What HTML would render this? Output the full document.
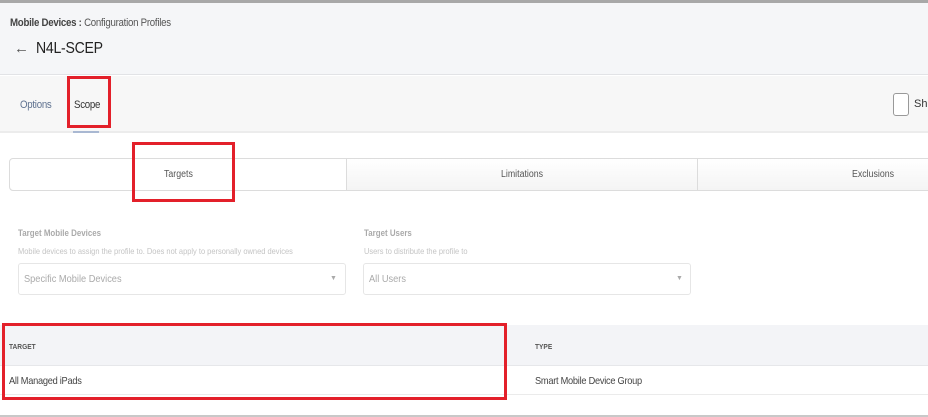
<!DOCTYPE html>
<html><head><style>
*{margin:0;padding:0;box-sizing:border-box}
body{width:928px;height:417px;overflow:hidden;background:#fff;font-family:"Liberation Sans",sans-serif;position:relative;color:#333}
.a{position:absolute}
.n{transform:scaleX(0.88);transform-origin:0 0;white-space:nowrap}
.red{position:absolute;border:3px solid #e3202a}
</style></head><body>
<div class="a" style="left:0;top:0;width:928px;height:3px;background:#a8a8a8"></div>
<div class="a" style="left:0;top:3px;width:928px;height:72px;background:#f5f6f8;border-bottom:1px solid #e2e3e6"></div>
<div class="a n" style="left:10px;top:17px;font-size:11px;color:#555;letter-spacing:-0.3px"><b style="color:#444">Mobile Devices</b> <b>:</b> Configuration Profiles</div>
<div class="a" style="left:14px;top:40px;font-size:15px;color:#555">&larr;</div>
<div class="a n" style="left:36px;top:40px;font-size:16px;color:#222;letter-spacing:-0.3px">N4L-SCEP</div>
<div class="a" style="left:0;top:76px;width:928px;height:57px;background:#f7f7f7;border-bottom:2px solid #ececec"></div>
<div class="a n" style="left:20px;top:99px;font-size:11px;color:#5f7290;letter-spacing:-0.3px">Options</div>
<div class="a n" style="left:74px;top:99px;font-size:11px;color:#333;letter-spacing:-0.3px">Scope</div>
<div class="a" style="left:73px;top:131px;width:26px;height:2px;background:#a9b8d2"></div>
<div class="a" style="left:893px;top:93px;width:16px;height:23px;border:1px solid #999;border-radius:3px;background:#fff"></div>
<div class="a" style="left:914px;top:98px;font-size:11px;color:#333">Sho</div>
<div class="a" style="left:9px;top:158px;width:930px;height:33px;border:1px solid #dcdcdc;border-radius:4px;background:linear-gradient(#fff,#f4f4f4)"></div>
<div class="a" style="left:10px;top:159px;width:336px;height:31px;background:#fff;border-radius:4px 0 0 4px"></div>
<div class="a" style="left:346px;top:159px;width:1px;height:31px;background:#dcdcdc"></div>
<div class="a" style="left:697px;top:159px;width:1px;height:31px;background:#dcdcdc"></div>
<div class="a n" style="left:164px;top:169px;font-size:10px;color:#555">Targets</div>
<div class="a n" style="left:501px;top:169px;font-size:10px;color:#555">Limitations</div>
<div class="a n" style="left:852px;top:169px;font-size:10px;color:#555">Exclusions</div>
<div class="a n" style="left:18px;top:228px;font-size:9px;color:#aaa;font-weight:bold">Target Mobile Devices</div>
<div class="a n" style="left:18px;top:246px;font-size:8.5px;color:#c4c4c4">Mobile devices to assign the profile to. Does not apply to personally owned devices</div>
<div class="a" style="left:18px;top:263px;width:328px;height:32px;border:1px solid #e6e6e6;border-radius:3px"></div>
<div class="a n" style="left:24px;top:273px;font-size:10.5px;color:#aaa">Specific Mobile Devices</div>
<div class="a" style="left:330px;top:275px;font-size:7px;color:#aaa">&#9660;</div>
<div class="a n" style="left:364px;top:228px;font-size:9px;color:#aaa;font-weight:bold">Target Users</div>
<div class="a n" style="left:364px;top:246px;font-size:8.5px;color:#c4c4c4">Users to distribute the profile to</div>
<div class="a" style="left:363px;top:263px;width:328px;height:32px;border:1px solid #e6e6e6;border-radius:3px"></div>
<div class="a n" style="left:369px;top:273px;font-size:10.5px;color:#aaa">All Users</div>
<div class="a" style="left:676px;top:275px;font-size:7px;color:#aaa">&#9660;</div>
<div class="a" style="left:0;top:325px;width:928px;height:41px;background:#f3f4f7;border-bottom:1px solid #e6e7ea"></div>
<div class="a n" style="left:9px;top:342px;font-size:7.5px;color:#555;font-weight:bold">TARGET</div>
<div class="a n" style="left:535px;top:342px;font-size:7.5px;color:#555;font-weight:bold">TYPE</div>
<div class="a" style="left:0;top:394px;width:928px;height:1px;background:#ebebeb"></div>
<div class="a n" style="left:9px;top:375px;font-size:10.5px;color:#444;letter-spacing:-0.3px">All Managed iPads</div>
<div class="a n" style="left:535px;top:375px;font-size:10.5px;color:#444;letter-spacing:-0.3px">Smart Mobile Device Group</div>
<div class="a" style="left:0;top:415px;width:928px;height:2px;background:#c8c8c8"></div>
<div class="red" style="left:67px;top:76px;width:44px;height:52px"></div>
<div class="red" style="left:132px;top:142px;width:103px;height:60px"></div>
<div class="red" style="left:2px;top:323px;width:505px;height:77px"></div>
</body></html>
